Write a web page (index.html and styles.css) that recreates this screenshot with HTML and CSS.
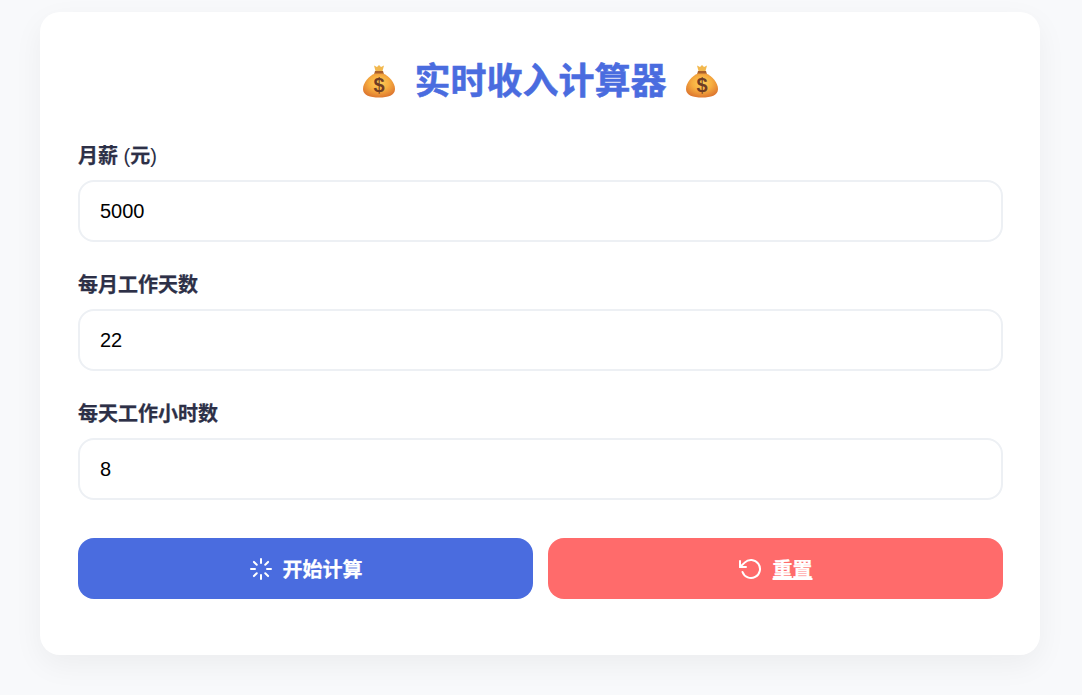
FILE: index.html
```html
<!DOCTYPE html>
<html lang="zh-CN">
<head>
<meta charset="utf-8">
<title>实时收入计算器</title>
<link rel="stylesheet" href="styles.css">
</head>
<body>
<svg class="defs" width="0" height="0" aria-hidden="true">
  <defs>
    <radialGradient id="bag" cx="0.5" cy="0.4" r="0.62">
      <stop offset="0" stop-color="#fdd05a"/>
      <stop offset="0.5" stop-color="#f7ae40"/>
      <stop offset="1" stop-color="#dd762f"/>
    </radialGradient>
    <symbol id="moneybag" viewBox="0 0 36 36">
      <path d="M13 2.500l3 1.500 2-2 2 2 3-1.500-1.500 5.500h-7z" fill="#f2b84e"/>
      <path d="M14 8h8l1 3.500h-10z" fill="#a9602c"/>
      <path d="M14 10.500C8 13 2 19.500 2 26c0 6.500 7 8.500 16 8.500s16-2 16-8.500c0-6.500-6-13-12-15.500z" fill="url(#bag)"/>
      <text x="18" y="29" text-anchor="middle" class="dollar">$</text>
    </symbol>
  </defs>
</svg>
<main class="card">
  <h1 class="title">
    <svg class="bag"><use href="#moneybag"/></svg>
    <span class="title-text">实时收入计算器</span>
    <svg class="bag"><use href="#moneybag"/></svg>
  </h1>
  <div class="field">
    <label class="label" for="salary">月薪 <span class="paren">(</span>元<span class="paren">)</span></label>
    <input class="input" id="salary" type="number" value="5000">
  </div>
  <div class="field">
    <label class="label" for="days">每月工作天数</label>
    <input class="input" id="days" type="number" value="22">
  </div>
  <div class="field">
    <label class="label" for="hours">每天工作小时数</label>
    <input class="input" id="hours" type="number" value="8">
  </div>
  <div class="actions">
    <button class="btn btn-start" type="button">
      <svg class="icon" viewBox="0 0 24 24" fill="none" stroke="currentColor" stroke-width="2" stroke-linecap="round" stroke-linejoin="round">
        <path d="M12 2v4M12 18v4M4.930 4.930l2.830 2.830M16.240 16.240l2.830 2.830M2 12h4M18 12h4M4.930 19.070l2.830-2.830M16.240 7.760l2.830-2.830"/>
      </svg>
      <span>开始计算</span>
    </button>
    <button class="btn btn-reset" type="button">
      <svg class="icon" viewBox="0 0 24 24" fill="none" stroke="currentColor" stroke-width="2" stroke-linecap="round" stroke-linejoin="round">
        <path d="M1 4v6h6"/>
        <path d="M3.510 15a9 9 0 1 0 2.130-9.360L1 10"/>
      </svg>
      <span class="underlined">重置</span>
    </button>
  </div>
</main>
</body>
</html>
```
FILE: styles.css
```css
* { box-sizing: border-box; }
html, body { margin: 0; height: 100%; }
body {
  background: #f8f9fb;
  font-family: "Liberation Sans", "Noto Sans CJK SC", sans-serif;
  padding: 12px 42px 40px 40px;
  overflow: hidden;
}
.defs { position: absolute; }
.card {
  width: 1000px;
  height: 643px;
  background: #fff;
  border-radius: 20px;
  padding: 38px 37px 0 38px;
  box-shadow: 0 10px 30px rgba(0, 0, 0, 0.05);
}
.title {
  margin: 0 0 35px;
  display: flex;
  align-items: center;
  justify-content: center;
  gap: 17px;
  height: 60px;
  font-size: 36px;
  line-height: 60px;
  font-weight: 700;
  color: #4a6cdf;
}
.title-text {
  padding-top: 4px;
  -webkit-text-stroke: 0.5px #4a6cdf;
}
.bag { width: 36px; height: 36px; margin-top: 2px; }
.dollar {
  font: 700 20px "Liberation Sans", sans-serif;
  fill: #6e3c24;
}
.field { margin-bottom: 32px; }
.label {
  display: block;
  font-size: 20px;
  line-height: 23px;
  font-weight: 700;
  color: #2d3047;
  margin-bottom: 12px;
  -webkit-text-stroke: 0.25px #2d3047;
}
.paren {
  font-weight: 400;
  -webkit-text-stroke: 0;
}
.input {
  display: block;
  width: 100%;
  height: 62px;
  padding: 0 20px;
  border: 2px solid #edf0f4;
  border-radius: 16px;
  background: #fff;
  font: 20px "Liberation Sans", sans-serif;
  color: #000;
  outline: none;
  appearance: textfield;
}
.actions {
  display: flex;
  gap: 15px;
  margin-top: 38px;
}
.btn {
  flex: 1;
  height: 61px;
  border: 0;
  border-radius: 16px;
  display: flex;
  align-items: center;
  justify-content: center;
  gap: 10px;
  color: #fff;
  font-family: "Liberation Sans", "Noto Sans CJK SC", sans-serif;
  font-size: 20px;
  font-weight: 700;
  padding: 0;
  -webkit-text-stroke: 0.25px #fff;
}
.btn-start { background: #4a6cdf; }
.btn-reset { background: #ff6b6b; }
.icon { width: 24px; height: 24px; }
.underlined { text-decoration: underline; }
```
